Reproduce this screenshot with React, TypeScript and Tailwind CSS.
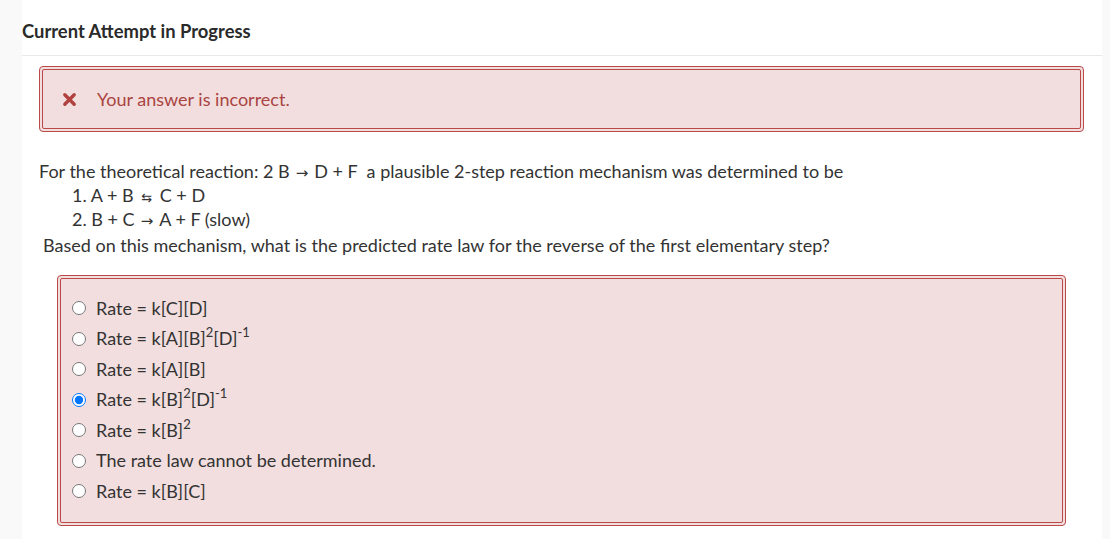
const sup = "relative -top-[8px] align-baseline text-[13px] leading-none";

const options = [
  { id: "a", label: <>Rate = k[C][D]</> },
  { id: "b", label: <>Rate = k[A][B]<sup className={sup}>2</sup>[D]<sup className={sup}>-1</sup></> },
  { id: "c", label: <>Rate = k[A][B]</> },
  { id: "d", label: <>Rate = k[B]<sup className={sup}>2</sup>[D]<sup className={sup}>-1</sup></>, checked: true },
  { id: "e", label: <>Rate = k[B]<sup className={sup}>2</sup></> },
  { id: "f", label: <>The rate law cannot be determined.</> },
  { id: "g", label: <>Rate = k[B][C]</> },
];

function Arrow() {
  return <span className="mx-[6px] text-[15px] leading-none font-['DejaVu_Sans',sans-serif]">→</span>;
}

export default function App() {
  return (
    <div className="min-h-[539px] bg-[#f9f9f9] font-['Lato',sans-serif] text-[#333]">
      <div className="ml-[22px] w-[1080px] min-h-[539px] bg-white">
        <div className="h-[56px] border-b border-[#e8e8e8] pt-[19px] text-[18.4px] font-bold leading-[24px] text-[#2a2a2a]">
          Current Attempt in Progress
        </div>

        <div className="ml-[17px] mr-[18px] mt-[10px] rounded-[4px] border border-[#b94a48] bg-[#f2dede] p-[2px]">
          <div className="flex h-[60px] items-center gap-[20px] rounded-[2px] border border-[#b94a48] pl-[19px]">
            <svg width="15" height="15" viewBox="0 0 16 16" className="shrink-0">
              <path d="M3 3 L13 13 M13 3 L3 13" stroke="#b0413e" strokeWidth="3.6" strokeLinecap="round" />
            </svg>
            <span className="text-[18px] text-[#a94442]">Your answer is incorrect.</span>
          </div>
        </div>

        <div className="mt-[27px] pl-[17px] text-[18px] leading-[24px]">
          <div>
            For the theoretical reaction: 2 B<Arrow />D + F&nbsp; a plausible 2-step reaction mechanism was determined to be
          </div>
          <div className="pl-[33px]">
            1. A + B <span className="mx-[3px] text-[13px] leading-none font-['DejaVu_Sans',sans-serif]">⇆</span> C + D
          </div>
          <div className="pl-[33px]">
            2. B + C<Arrow />A + F (slow)
          </div>
          <div className="mt-[2px] pl-[4px]">
            Based on this mechanism, what is the predicted rate law for the reverse of the first elementary step?
          </div>
        </div>

        <div className="ml-[35px] mr-[36px] mt-[18px] rounded-[4px] border border-[#b94a48] bg-[#f2dede] p-[2px]">
          <div className="flex flex-col rounded-[2px] border border-[#b94a48] pb-[15px] pl-[11px] pt-[14px]">
            {options.map((o) => (
              <label key={o.id} className="flex h-[30.5px] items-center gap-[10px] text-[18px]">
                <input
                  type="radio"
                  name="ans"
                  defaultChecked={o.checked}
                  className="m-0 h-[14px] w-[14px] shrink-0"
                />
                <span>{o.label}</span>
              </label>
            ))}
          </div>
        </div>
      </div>
    </div>
  );
}
